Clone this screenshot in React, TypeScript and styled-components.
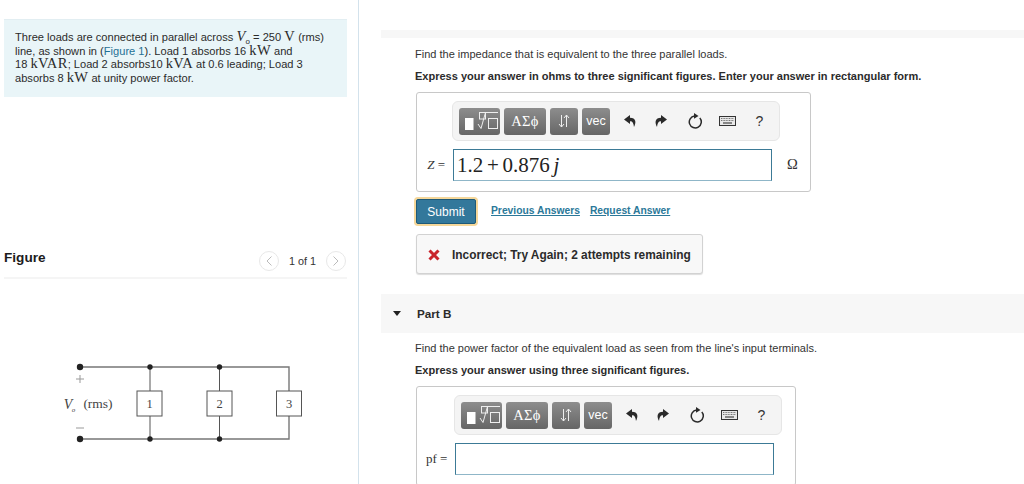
import React from "react";
import styled, { createGlobalStyle } from "styled-components";

const GlobalStyle = createGlobalStyle`
  html, body {
    margin: 0;
    padding: 0;
    height: 484px;
    overflow: hidden;
    background: #fff;
    font-family: "Liberation Sans", Arial, sans-serif;
    color: #222;
  }
`;

const Page = styled.div`
  display: flex;
  width: 1024px;
  height: 484px;
  overflow: hidden;
`;

const LeftColumn = styled.div`
  width: 359px;
  height: 484px;
  flex-shrink: 0;
  box-sizing: border-box;
  padding: 19px 11px 0 4px;
  border-right: 1px solid #d3e2ec;
`;

const InfoBox = styled.div`
  height: 78px;
  box-sizing: border-box;
  padding: 11px 8px 0 11px;
  background: #e9f5f8;
  border-top: 1px solid #e2eef2;
  font-size: 11.1px;
  line-height: 13.5px;
  color: #2b2b2b;
`;

const MathText = styled.span`
  font-family: "Liberation Serif", serif;
  font-size: 14.5px;
  line-height: 0;
  letter-spacing: 0.3px;
`;

const MathItalic = styled(MathText)`
  font-style: italic;
`;

const Sub = styled.sub`
  font-size: 8px;
  line-height: 0;
`;

const FigureLink = styled.span`
  color: #1f7196;
`;

const FigureHeader = styled.div`
  display: flex;
  align-items: flex-start;
  justify-content: space-between;
  height: 27px;
  margin-top: 153px;
  border-bottom: 2px solid #f5f5f5;
`;

const FigureTitle = styled.div`
  font-size: 13.6px;
  font-weight: 700;
  color: #1c1c1c;
  line-height: 15px;
`;

const Pager = styled.div`
  display: flex;
  align-items: center;
  gap: 10px;
  margin: 1px 1px 0 0;
  font-size: 10.8px;
  color: #333;
`;

const PagerButton = styled.div`
  width: 20px;
  height: 20px;
  border-radius: 50%;
  border: 1px solid #e8e8e8;
  box-sizing: border-box;
  display: flex;
  align-items: center;
  justify-content: center;
`;

const CircuitWrap = styled.div`
  margin: 80px 0 0 50px;
`;

const RightColumn = styled.div`
  flex: 1;
  padding: 30px 0 0 22px;
  min-width: 0;
`;

const TopBar = styled.div`
  height: 8px;
  background: #f7f7f7;
`;

const Section = styled.div`
  padding-left: 34px;
`;

const Prompt = styled.p<{ $top: number }>`
  margin: ${(p) => p.$top}px 0 0;
  font-size: 11.03px;
  line-height: 13px;
  color: #333;
`;

const Instruction = styled.p`
  margin: 9px 0 0;
  font-size: 11.03px;
  line-height: 13px;
  font-weight: 700;
  color: #2b2b2b;
`;

const AnswerBox = styled.div<{ $width: number; $top: number; $pad: number }>`
  width: ${(p) => p.$width}px;
  height: 100px;
  box-sizing: border-box;
  margin: ${(p) => p.$top}px 0 0 1px;
  padding-top: 8px;
  padding-left: ${(p) => p.$pad}px;
  border: 1px solid #c8c8c8;
  border-radius: 3px;
`;

const Toolbar = styled.div`
  display: flex;
  align-items: center;
  width: 328px;
  height: 40px;
  box-sizing: border-box;
  padding-left: 6px;
  background: #f4f4f4;
  border: 1px solid #e6e6e6;
  border-radius: 6px;
`;

const ToolButton = styled.div<{ $width: number }>`
  display: flex;
  align-items: center;
  justify-content: center;
  width: ${(p) => p.$width}px;
  height: 27px;
  margin-right: 4px;
  border-radius: 3px;
  background: linear-gradient(#8d8d8d, #666);
  color: #fff;
  font-size: 12.5px;
`;

const SymbolText = styled.span`
  font-family: "Liberation Serif", serif;
  font-size: 14.5px;
  letter-spacing: 0.3px;
`;

const ToolIcons = styled.div`
  display: flex;
  align-items: center;
  flex: 1;
  padding-left: 10px;
`;

const ToolIcon = styled.div<{ $width: number }>`
  display: flex;
  justify-content: center;
  width: ${(p) => p.$width}px;
  color: #333;
  font-size: 14px;
`;

const InputRow = styled.div`
  display: flex;
  align-items: center;
  margin-top: 8px;
`;

const InputLabel = styled.div`
  width: 29px;
  margin-left: -28px;
  box-sizing: border-box;
  padding-right: 8px;
  flex-shrink: 0;
  text-align: right;
  font-family: "Liberation Serif", serif;
  font-size: 13px;
  white-space: nowrap;
  color: #333;
`;

const MathInput = styled.div`
  width: 319px;
  height: 32px;
  box-sizing: border-box;
  border: 1px solid #3c7a96;
  border-bottom-color: #8fb6c8;
  padding-left: 3px;
  font-family: "Liberation Serif", serif;
  font-size: 21px;
  line-height: 30px;
  word-spacing: -1.5px;
  color: #222;
  white-space: pre;
`;

const Unit = styled.div`
  margin: -2px 0 0 15px;
  font-family: "Liberation Serif", serif;
  font-size: 14.5px;
  color: #333;
`;

const ActionRow = styled.div`
  display: flex;
  align-items: center;
  margin: 7px 0 0 1px;
`;

const SubmitButton = styled.button`
  width: 60px;
  height: 25px;
  padding: 0;
  background: #33789b;
  border: 1px solid #1f5a78;
  border-radius: 2px;
  box-shadow: 0 0 0 2px #f5d79a;
  color: #fff;
  font-family: inherit;
  font-size: 12px;
`;

const TextLink = styled.a<{ $gap: number }>`
  margin: -2px 0 0 ${(p) => p.$gap}px;
  font-size: 10.3px;
  font-weight: 700;
  color: #2b7899;
  text-decoration: underline;
`;

const Feedback = styled.div`
  display: flex;
  align-items: center;
  gap: 12px;
  width: 287px;
  height: 40px;
  box-sizing: border-box;
  margin: 10px 0 0 1px;
  padding: 1px 0 0 11px;
  background: #f8f8f8;
  border: 1px solid #d2d2d2;
  border-radius: 3px;
  box-shadow: 0 1px 1px #ddd;
  font-size: 11.9px;
  font-weight: 700;
  color: #2b2b2b;
`;

const PartBar = styled.div`
  display: flex;
  align-items: center;
  height: 39px;
  margin-top: 20px;
  padding-left: 12px;
  background: #f7f7f7;
`;

const Caret = styled.div`
  width: 0;
  height: 0;
  border-left: 4.5px solid transparent;
  border-right: 4.5px solid transparent;
  border-top: 5px solid #222;
`;

const PartTitle = styled.div`
  margin-left: 16px;
  font-size: 11.7px;
  font-weight: 700;
  color: #2b2b2b;
`;

const Circuit = () => (
  <svg width="260" height="96" viewBox="54 359 260 96">
    <g stroke="#777" strokeWidth="1" fill="none">
      <path d="M80 367H289V391M80 439H289V416" strokeWidth="1.4" />
      <path d="M150 367V391M150 416V439M219.500 367V391M219.500 416V439" stroke="#555" />
      <rect x="137" y="391" width="25" height="25" stroke="#555" fill="#fff" />
      <rect x="207" y="391" width="25" height="25" stroke="#555" fill="#fff" />
      <rect x="276.500" y="391" width="25" height="25" stroke="#555" fill="#fff" />
      <path d="M76 379H84M80 375V383M76 428H84" stroke="#999" />
    </g>
    <g fill="#222">
      <circle cx="80" cy="367" r="3.200" />
      <circle cx="80" cy="439" r="3.200" />
      <circle cx="150" cy="367" r="2.700" />
      <circle cx="150" cy="439" r="2.700" />
      <circle cx="219.500" cy="367" r="2.700" />
      <circle cx="219.500" cy="439" r="2.700" />
    </g>
    <g fontFamily="'Liberation Serif', serif" fontSize="12.5" fill="#444" textAnchor="middle">
      <text x="149.500" y="408">1</text>
      <text x="219.500" y="408">2</text>
      <text x="289" y="408">3</text>
      <text x="68" y="409" fontStyle="italic" fontSize="14">V</text>
      <text x="73.500" y="412" fontStyle="italic" fontSize="7">o</text>
      <text x="98" y="408" fontSize="13.500">(rms)</text>
    </g>
  </svg>
);

const RadicalIcon = () => (
  <svg width="36" height="26" viewBox="0 0 36 26">
    <rect x="3" y="10" width="8.500" height="12" fill="#fff" />
    <g fill="none" stroke="#eee" strokeWidth="1">
      <rect x="17.500" y="4.500" width="6" height="6.500" />
      <path d="M16 16L19 20.500L23.500 4.500H36" />
      <rect x="26.500" y="10.500" width="9" height="10" />
    </g>
  </svg>
);

const ArrowsIcon = () => (
  <svg width="14" height="16" viewBox="0 0 14 16">
    <path d="M4.500 2V14M4.500 14L2 11M4.500 14L7 11M9.500 14V2M9.500 2L7 5M9.500 2L12 5" stroke="#eee" strokeWidth="1" fill="none" />
  </svg>
);

const UndoIcon = ({ flip }: { flip?: boolean }) => (
  <svg width="13" height="14" viewBox="0 0 13 14" style={flip ? { transform: "scaleX(-1)" } : undefined}>
    <path d="M6 1L0 5.500L6 10V7.200C8.500 7 9.500 9 10 13C12.500 8.500 12 3.800 6 3.800Z" fill="#2a2a2a" />
  </svg>
);

const RefreshIcon = () => (
  <svg width="15" height="16" viewBox="0 0 15 16">
    <path d="M11.800 5A6 6 0 1 1 6.500 3" fill="none" stroke="#2a2a2a" strokeWidth="1.500" />
    <path d="M6 0L10.500 3L6 5.800Z" fill="#2a2a2a" />
  </svg>
);

const KeyboardIcon = () => (
  <svg width="17" height="10" viewBox="0 0 17 10">
    <rect x="0.500" y="0.500" width="16" height="9" fill="#e8e8e8" stroke="#333" />
    <path d="M2 2.500H15M2 4.500H15" stroke="#777" strokeWidth="1" strokeDasharray="1 0.600" />
    <path d="M4 7H13" stroke="#666" strokeWidth="1.500" />
  </svg>
);

const MathToolbar = () => (
  <Toolbar>
    <ToolButton $width={41}>
      <RadicalIcon />
    </ToolButton>
    <ToolButton $width={42}>
      <SymbolText>ΑΣϕ</SymbolText>
    </ToolButton>
    <ToolButton $width={28}>
      <ArrowsIcon />
    </ToolButton>
    <ToolButton $width={28}>vec</ToolButton>
    <ToolIcons>
      <ToolIcon $width={13}>
        <UndoIcon />
      </ToolIcon>
      <ToolIcon $width={47}>
        <UndoIcon flip />
      </ToolIcon>
      <ToolIcon $width={23}>
        <RefreshIcon />
      </ToolIcon>
      <ToolIcon $width={41}>
        <KeyboardIcon />
      </ToolIcon>
      <ToolIcon $width={23}>?</ToolIcon>
    </ToolIcons>
  </Toolbar>
);

const App = () => (
  <Page>
    <GlobalStyle />
    <LeftColumn>
      <InfoBox>
        Three loads are connected in parallel across <MathItalic>V</MathItalic>
        <Sub>o</Sub> = 250 <MathText>V</MathText> (rms)
        <br />
        line, as shown in (<FigureLink>Figure 1</FigureLink>). Load 1 absorbs 16 <MathText>kW</MathText> and
        <br />
        18 <MathText>kVAR</MathText>; Load 2 absorbs10 <MathText>kVA</MathText> at 0.6 leading; Load 3
        <br />
        absorbs 8 <MathText>kW</MathText> at unity power factor.
      </InfoBox>
      <FigureHeader>
        <FigureTitle>Figure</FigureTitle>
        <Pager>
          <PagerButton>
            <svg width="8" height="12" viewBox="0 0 8 12">
              <path d="M6.500 1.500L2 6L6.500 10.500" fill="none" stroke="#bbb" />
            </svg>
          </PagerButton>
          1 of 1
          <PagerButton>
            <svg width="8" height="12" viewBox="0 0 8 12">
              <path d="M1.500 1.500L6 6L1.500 10.500" fill="none" stroke="#bbb" />
            </svg>
          </PagerButton>
        </Pager>
      </FigureHeader>
      <CircuitWrap>
        <Circuit />
      </CircuitWrap>
    </LeftColumn>
    <RightColumn>
      <TopBar />
      <Section>
        <Prompt $top={10}>Find the impedance that is equivalent to the three parallel loads.</Prompt>
        <Instruction>Express your answer in ohms to three significant figures. Enter your answer in rectangular form.</Instruction>
        <AnswerBox $width={395} $top={9} $pad={35}>
          <MathToolbar />
          <InputRow>
            <InputLabel>
              <i>Z</i> =
            </InputLabel>
            <MathInput>
              1.2 + 0.876 <i>j</i>
            </MathInput>
            <Unit>Ω</Unit>
          </InputRow>
        </AnswerBox>
        <ActionRow>
          <SubmitButton>Submit</SubmitButton>
          <TextLink $gap={15}>Previous Answers</TextLink>
          <TextLink $gap={10}>Request Answer</TextLink>
        </ActionRow>
        <Feedback>
          <svg width="12" height="12" viewBox="0 0 12 12">
            <path d="M1.500 1.500L10.500 10.500M10.500 1.500L1.500 10.500" stroke="#c9252c" strokeWidth="3" />
          </svg>
          Incorrect; Try Again; 2 attempts remaining
        </Feedback>
      </Section>
      <PartBar>
        <Caret />
        <PartTitle>Part B</PartTitle>
      </PartBar>
      <Section>
        <Prompt $top={9}>Find the power factor of the equivalent load as seen from the line's input terminals.</Prompt>
        <Instruction>Express your answer using three significant figures.</Instruction>
        <AnswerBox $width={380} $top={9} $pad={37}>
          <MathToolbar />
          <InputRow>
            <InputLabel>pf =</InputLabel>
            <MathInput />
          </InputRow>
        </AnswerBox>
      </Section>
    </RightColumn>
  </Page>
);

export default App;
